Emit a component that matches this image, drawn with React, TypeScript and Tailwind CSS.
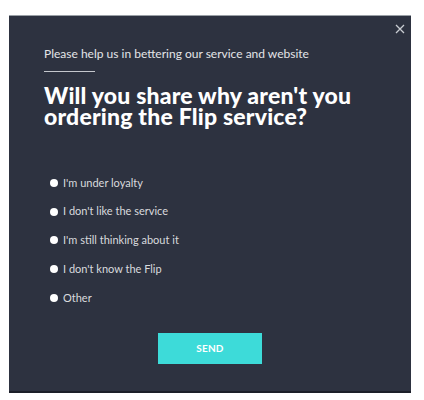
import React from "react";

const options = [
  "I'm under loyalty",
  "I don't like the service",
  "I'm still thinking about it",
  "I don't know the Flip",
  "Other",
];

export default function App() {
  return (
    <div className="w-full h-[400px] bg-white pt-[15px] px-[9px]" style={{ fontFamily: "Lato, 'Open Sans', sans-serif" }}>
      <div className="relative w-[402px] h-[378px] bg-[#2d3240] border-t border-t-[#9aa0a6] border-b-2 border-b-[#1c1f29] pt-[30px] pl-[35px]">
        <button className="absolute top-[8px] right-[6px] w-[10px] h-[10px] flex items-center justify-center">
          <svg width="10" height="10" viewBox="0 0 10 10">
            <path d="M1 1L9 9M9 1L1 9" stroke="#c9ccd2" strokeWidth="1.3" />
          </svg>
        </button>
        <p className="text-[12px] leading-[16px] text-[#e4e5e8]">Please help us in bettering our service and website</p>
        <div className="mt-[9px] w-[51px] h-px bg-[#c4c7cd]" />
        <h1 className="mt-[13px] text-[23px] leading-[21px] font-black text-white tracking-[0.2px]">
          Will you share why aren't you
          <br />
          ordering the Flip service?
        </h1>
        <div className="mt-[48px] flex flex-col gap-[12.7px] pl-[6px]">
          {options.map((o) => (
            <label key={o} className="flex items-center gap-[5px] h-[16px] text-[11px] text-[#d9dade]">
              <span className="w-[8px] h-[8px] rounded-full bg-white" />
              {o}
            </label>
          ))}
        </div>
        <button className="mt-[27px] ml-[114px] w-[104px] h-[31px] bg-[#3ddbd9] text-white text-[10px] font-bold tracking-[0.2px] flex items-center justify-center">
          SEND
        </button>
      </div>
    </div>
  );
}
